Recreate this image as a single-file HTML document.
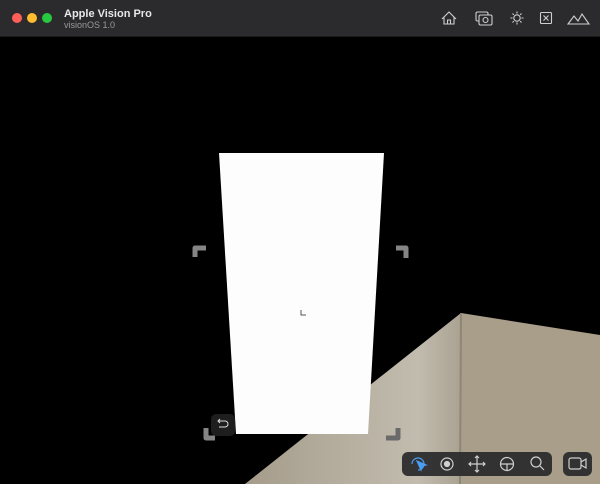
<!DOCTYPE html>
<html><head><style>
html,body{margin:0;padding:0;width:600px;height:484px;overflow:hidden;background:#000;font-family:"Liberation Sans",sans-serif}
.bar{position:absolute;left:0;top:0;width:600px;height:36px;background:#2b2a2d;border-bottom:1px solid #1a1a1a}
.dot{position:absolute;top:13px;width:10px;height:10px;border-radius:50%}
.t1{position:absolute;left:64px;top:8px;color:#e8e8e8;font-size:11px;font-weight:bold}
.t2{position:absolute;left:64px;top:20px;color:#9a9a9a;font-size:9px}
svg{position:absolute}
</style></head><body>
<svg width="600" height="484" style="left:0;top:0">
<defs>
<linearGradient id="lw" x1="0" x2="1" y1="0" y2="0"><stop offset="0" stop-color="#a59c8a"/><stop offset="0.8" stop-color="#c2bcaf"/><stop offset="1" stop-color="#aaa291"/></linearGradient>
</defs>
<polygon points="461,313 245,484 461,484" fill="url(#lw)"/>
<polygon points="461,313 600,335 600,484 461,484" fill="#a99e8a"/>
<line x1="461" y1="313" x2="460" y2="484" stroke="#8f8677" stroke-width="2"/>
<polygon points="219,153 384,153 368,434 236,434" fill="#fdfdfe"/>
<path d="M301 310 v5 h5" stroke="#555" fill="none" stroke-width="1"/>
<g stroke="#858585" fill="none" stroke-width="5" stroke-linejoin="round">
<path d="M195 257 v-9 h11"/>
<path d="M396 248 h10 v10"/>
<path d="M206 428 v10 h9"/>
<path d="M386 438 h12 v-10" stroke="#6a6a6a"/>
</g>
<rect x="211" y="414" width="24" height="22" rx="5" fill="#1e1e1e"/>
<path d="M218 421 h7 a3 3 0 0 1 0 6 h-6 M220 419 l-2 2 2 2" stroke="#ddd" fill="none" stroke-width="1"/>
<rect x="402" y="452" width="150" height="24" rx="6" fill="#2c2c2e" opacity="0.95"/>
<rect x="563" y="452" width="29" height="24" rx="6" fill="#2c2c2e" opacity="0.95"/>
<g stroke="#cfcfcf" fill="none" stroke-width="1.2">
<path d="M412 464 a6 6 0 1 1 6 6" stroke="#4a9ff5"/><path d="M417 461 l4 9 1-4 4-1z" fill="#4a9ff5" stroke="#4a9ff5"/>
<circle cx="447" cy="464" r="6"/><circle cx="447" cy="464" r="2.5" fill="#cfcfcf"/>
<path d="M477 456 v16 M469 464 h16 M475 458 l2-2 2 2 M475 470 l2 2 2-2 M471 462 l-2 2 2 2 M483 462 l2 2-2 2"/>
<circle cx="507" cy="464" r="6.5"/><path d="M500.5 464 h13 M507 464 v6.5"/>
<circle cx="536" cy="462" r="5"/><path d="M540 466 l4 4"/>
<rect x="569" y="458" width="12" height="11" rx="2"/><path d="M581 462 l5-3 v9 l-5-3"/>
</g>
</svg>
<div class="bar">
<div class="dot" style="left:12px;background:#fe5f57"></div>
<div class="dot" style="left:27px;background:#febc2e"></div>
<div class="dot" style="left:42px;background:#28c840"></div>
<div class="t1">Apple Vision Pro</div>
<div class="t2">visionOS 1.0</div>
<svg width="600" height="36" style="left:0;top:0">
<g stroke="#cfcfcf" fill="none" stroke-width="1.1">
<path d="M442 19 l7-7 7 7 M444 17 v7 h10 v-7 M447.5 24 v-4 h3 v4"/>
<rect x="476" y="12" width="12" height="9" rx="1.5"/><rect x="479" y="15" width="13" height="10" rx="1.5" fill="#2b2a2d"/><circle cx="485.5" cy="20" r="2.5"/>
<circle cx="517" cy="18" r="3.2"/><path d="M517 11.5v2 M517 22.5v2 M510.5 18h2 M521.5 18h2 M512.5 13.5l1.3 1.3 M520.2 21.2l1.3 1.3 M521.5 13.5l-1.3 1.3 M513.8 21.2l-1.3 1.3"/>
<rect x="540.5" y="12.5" width="11" height="11" rx="1"/><path d="M543.5 15.5 l5 5 M548.5 15.5 l-5 5"/>
<path d="M568 24 l6-8 4 5 4-7 7 10z"/>
</g>
</svg>
</div>
</body></html>
